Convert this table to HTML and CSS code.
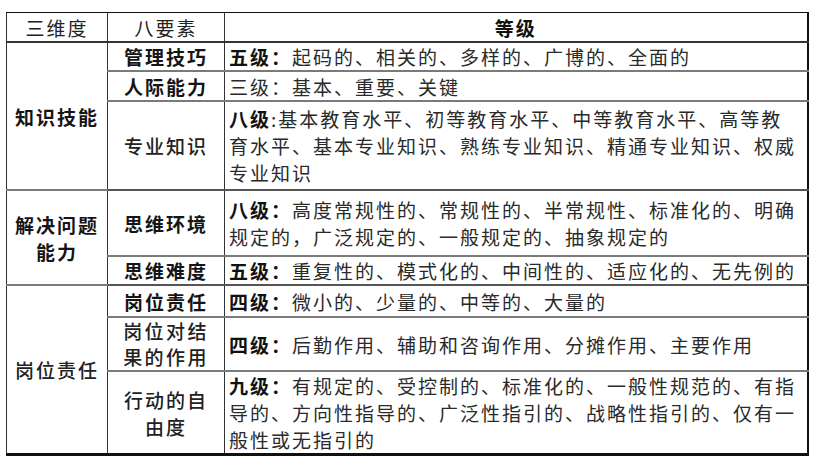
FILE: index.html
```html
<!DOCTYPE html>
<html lang="zh-CN">
<head>
<meta charset="utf-8">
<title>三维度 八要素 等级</title>
<link rel="stylesheet" href="styles.css">
</head>
<body>
<div class="page">
<table class="grid">
  <colgroup>
    <col class="c1"><col class="c2"><col class="c3">
  </colgroup>
  <thead>
    <tr class="h-head">
      <th class="dim med">三维度</th>
      <th class="elem med">八要素</th>
      <th class="level-head">等级</th>
    </tr>
  </thead>
  <tbody>
    <tr class="h-r1">
      <td class="dim bold" rowspan="3">知识技能</td>
      <td class="elem bold">管理技巧</td>
      <td class="lv"><b>五级：</b>起码的、相关的、多样的、广博的、全面的</td>
    </tr>
    <tr class="h-r2">
      <td class="elem bold">人际能力</td>
      <td class="lv">三级：基本、重要、关键</td>
    </tr>
    <tr class="h-r3 group-end">
      <td class="elem med">专业知识</td>
      <td class="lv"><b>八级</b>:基本教育水平、初等教育水平、中等教育水平、高等教<br>育水平、基本专业知识、熟练专业知识、精通专业知识、权威<br>专业知识</td>
    </tr>
    <tr class="h-r4">
      <td class="dim bold" rowspan="2">解决问题<br>能力</td>
      <td class="elem bold">思维环境</td>
      <td class="lv"><b>八级：</b>高度常规性的、常规性的、半常规性、标准化的、明确<br>规定的，广泛规定的、一般规定的、抽象规定的</td>
    </tr>
    <tr class="h-r5 group-end">
      <td class="elem bold">思维难度</td>
      <td class="lv"><b>五级：</b>重复性的、模式化的、中间性的、适应化的、无先例的</td>
    </tr>
    <tr class="h-r6">
      <td class="dim med last-row" rowspan="3">岗位责任</td>
      <td class="elem bold">岗位责任</td>
      <td class="lv"><b>四级：</b>微小的、少量的、中等的、大量的</td>
    </tr>
    <tr class="h-r7">
      <td class="elem med wide">岗位对结<br>果的作用</td>
      <td class="lv"><b>四级：</b>后勤作用、辅助和咨询作用、分摊作用、主要作用</td>
    </tr>
    <tr class="h-r8 last-row">
      <td class="elem med">行动的自<br>由度</td>
      <td class="lv"><b>九级：</b>有规定的、受控制的、标准化的、一般性规范的、有指<br>导的、方向性指导的、广泛性指引的、战略性指引的、仅有一<br>般性或无指引的</td>
    </tr>
  </tbody>
</table>
</div>
</body>
</html>
```

FILE: styles.css
```css
html, body {
  margin: 0;
  padding: 0;
  background: #ffffff;
}

.page {
  padding: 12px 0 0 6px;
}

.grid {
  border-collapse: collapse;
  width: 801px;
  table-layout: fixed;
  font-family: "Noto Sans CJK SC", "Noto Sans", sans-serif;
  font-size: 19px;
  line-height: 27px;
  letter-spacing: 2px;
  color: #2a2a2a;
  border-top: 1px solid #111;
  border-left: 1px solid #111;
  border-right: 2px solid #111;
  border-bottom: 3px solid #111;
}

.c1 { width: 101px; }
.c2 { width: 117px; }
.c3 { width: 583px; }

.grid th,
.grid td {
  padding: 0;
  vertical-align: middle;
  border-left: 1px solid #333;
  border-right: 1px solid #333;
  border-top: 2px solid #7a7a7a;
  border-bottom: 2px solid #7a7a7a;
  white-space: nowrap;
  overflow: hidden;
}

.grid th {
  font-weight: 400;
  border-bottom: 2px solid #333;
  border-top: 1px solid #111;
}

.dim,
.elem {
  text-align: center;
}

.level-head {
  text-align: center;
  font-weight: 700 !important;
  color: #111;
}

.lv {
  text-align: left;
  padding-left: 4px !important;
}

.lv b {
  font-weight: 700;
  color: #111;
}

.bold {
  font-weight: 700;
  color: #151515;
}

.med {
  font-weight: 500;
  color: #222;
}

.wide {
  letter-spacing: 2.4px;
  line-height: 26px;
}

.group-end td {
  border-bottom: 2px solid #555;
}

.last-row,
.last-row td {
  border-bottom: 3px solid #111;
}

.h-head th { height: 28px; }
.h-r1 td { height: 26px; }
.h-r2 td { height: 28px; }
.h-r3 td { height: 87px; }
.h-r4 td { height: 64px; }
.h-r5 td { height: 26px; }
.h-r6 td { height: 30px; }
.h-r7 td { height: 52px; }
.h-r8 td { height: 81px; }
```
